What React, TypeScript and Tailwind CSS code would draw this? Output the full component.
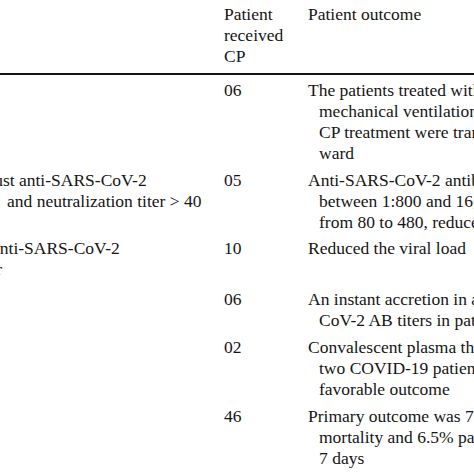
type Line = { text: string; pl: number };

const rows: { cp: string; pt: string; left: Line[]; outcome: string[] }[] = [
  {
    cp: '06',
    pt: 'pt-[5px]',
    left: [],
    outcome: [
      'The patients treated with CP without',
      'mechanical ventilation and after',
      'CP treatment were transferred to the',
      'ward',
    ],
  },
  {
    cp: '05',
    pt: 'pt-[6px]',
    left: [
      { text: 'Robust anti-SARS-CoV-2', pl: 0 },
      { text: 'and neutralization titer > 40', pl: 42 },
    ],
    outcome: [
      'Anti-SARS-CoV-2 antibody titers were',
      'between 1:800 and 16,000; neutralization',
      'from 80 to 480, reduced the viral load',
    ],
  },
  {
    cp: '10',
    pt: 'pt-[5px]',
    left: [
      { text: 'anti-SARS-CoV-2', pl: 27 },
      { text: 'titer', pl: 9 },
    ],
    outcome: ['Reduced the viral load'],
  },
  {
    cp: '06',
    pt: 'pt-[9px]',
    left: [],
    outcome: ['An instant accretion in anti-SARS-', 'CoV-2 AB titers in patients'],
  },
  {
    cp: '02',
    pt: 'pt-[6px]',
    left: [],
    outcome: ['Convalescent plasma therapy in', 'two COVID-19 patients showed', 'favorable outcome'],
  },
  {
    cp: '46',
    pt: 'pt-[6px]',
    left: [],
    outcome: ['Primary outcome was 7.3% 7-day', 'mortality and 6.5% patients in ICU at', '7 days'],
  },
];

export default function App() {
  return (
    <div className="w-[474px] h-[474px] overflow-hidden bg-white text-[#151515] font-['Liberation_Serif','Times_New_Roman',serif] text-[17.5px] leading-[21px]">
      <div className="ml-[-35px] w-[560px]">
        {/* header */}
        <div className="flex pt-[4px] pb-[6px] border-b-[2px] border-[#151515]">
          <div className="w-[259px] shrink-0" />
          <div className="w-[84px] shrink-0">
            <div>Patient</div>
            <div>received</div>
            <div>CP</div>
          </div>
          <div className="flex-1 whitespace-nowrap">Patient outcome</div>
        </div>

        {rows.map((row, i) => (
          <div key={i} className={`flex ${row.pt}`}>
            <div className="w-[259px] shrink-0">
              {row.left.map((line, j) => (
                <div key={j} className="whitespace-nowrap" style={{ paddingLeft: line.pl }}>
                  {line.text}
                </div>
              ))}
            </div>
            <div className="w-[84px] shrink-0">{row.cp}</div>
            <div className="flex-1">
              {row.outcome.map((line, j) => (
                <div key={j} className={j === 0 ? 'whitespace-nowrap' : 'whitespace-nowrap pl-[11px]'}>
                  {line}
                </div>
              ))}
            </div>
          </div>
        ))}
      </div>
    </div>
  );
}
